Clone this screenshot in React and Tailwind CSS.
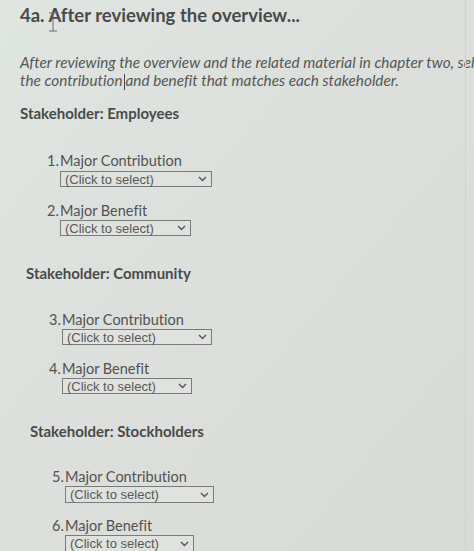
import React from "react";

function Chevron() {
  return (
    <svg width="9" height="6" viewBox="0 0 9 6" className="shrink-0">
      <path d="M1 1 L4.5 4.5 L8 1" fill="none" stroke="#555" strokeWidth="1.4" />
    </svg>
  );
}

function Select({ w, h = "h-[16px]" }) {
  return (
    <div
      className={`${w} ${h} flex items-center justify-between border border-[#7a7c7a] pl-[4px] pr-[4px] text-[13px] leading-none text-[#585858] bg-[#dfe2de]`}
      style={{ fontFamily: '"Liberation Sans", Arial, sans-serif' }}
    >
      <span>(Click to select)</span>
      <Chevron />
    </div>
  );
}

function Item({ num, label, selW, mt, selMt = "mt-[1px]", h }) {
  return (
    <div className={mt}>
      <div className="flex text-[14.5px] leading-[18px] text-[#525252] [font-variant-ligatures:none]">
        <span className="w-[13px]">{num}.</span>
        <span>{label}</span>
      </div>
      <div className={`${selMt} ml-[13px]`}>
        <Select w={selW} h={h} />
      </div>
    </div>
  );
}

export default function App() {
  return (
    <div
      className="relative w-[474px] h-[551px] overflow-hidden bg-linear-to-br from-[#dfe5e1] via-[#dcdfdb] to-[#d8dad5] [font-variant-ligatures:none]"
      style={{ fontFamily: 'Lato, "Open Sans", sans-serif' }}
    >
      <div className="absolute right-[8px] top-0 h-full w-px bg-[#cfd2ce]" />
      <div className="pl-[20px] pt-[3px]">
        <div className="relative text-[18.5px] leading-[24px] font-bold text-[#4a4a4a] whitespace-nowrap">
          4a. After reviewing the overview...
          <svg className="absolute left-[27px] top-[9px]" width="12" height="20" viewBox="0 0 12 20">
            <path d="M2 1 H10 M6 1 V19 M2 19 H10" fill="none" stroke="#6a6a6a" strokeWidth="1" />
          </svg>
        </div>

        <div className="mt-[26px] italic text-[15.3px] leading-[18px] text-[#575757] whitespace-nowrap">
          After reviewing the overview and the related material in chapter two, select
          <br />
          the contribution<span className="inline-block w-px h-[16px] bg-[#444] align-middle mx-px" />and benefit that matches each stakeholder.
        </div>

        <div className="mt-[14px] text-[15px] leading-[18px] font-bold text-[#4a4a4a]">
          Stakeholder: Employees
        </div>

        <div className="ml-[27px]">
          <Item num="1" label="Major Contribution" selW="w-[152px]" mt="mt-[30px]" />
          <Item num="2" label="Major Benefit" selW="w-[131px]" mt="mt-[15px]" selMt="mt-0" />
        </div>

        <div className="ml-[6px] mt-[28px] text-[15px] leading-[18px] font-bold text-[#4a4a4a]">
          Stakeholder: Community
        </div>

        <div className="ml-[29px]">
          <Item num="3" label="Major Contribution" selW="w-[150px]" mt="mt-[29px]" selMt="mt-0" />
          <Item num="4" label="Major Benefit" selW="w-[130px]" mt="mt-[15px]" selMt="mt-0" />
        </div>

        <div className="ml-[10px] mt-[28px] text-[15px] leading-[18px] font-bold text-[#4a4a4a]">
          Stakeholder: Stockholders
        </div>

        <div className="ml-[32px]">
          <Item num="5" label="Major Contribution" selW="w-[149px]" mt="mt-[28px]" selMt="mt-0" h="h-[17px]" />
          <Item num="6" label="Major Benefit" selW="w-[129px]" mt="mt-[14px]" selMt="mt-0" h="h-[17px]" />
        </div>
      </div>
    </div>
  );
}
